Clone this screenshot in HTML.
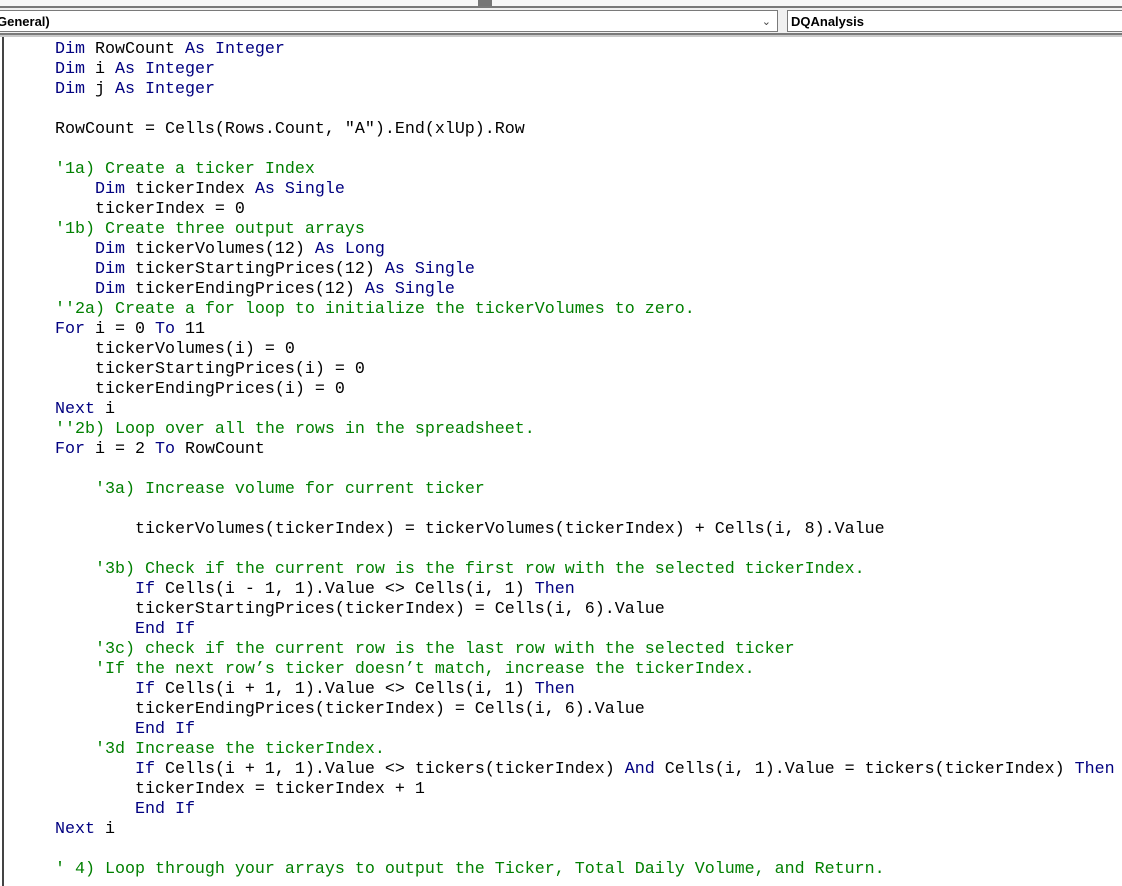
<!DOCTYPE html>
<html><head><meta charset="utf-8"><style>
body{margin:0;width:1122px;height:886px;background:#fff;overflow:hidden;position:relative;font-family:"Liberation Sans",sans-serif}
.top{position:absolute;left:0;top:0;width:1122px;height:6px;background:#f8f8f8}
.l1{position:absolute;left:0;top:6px;width:1122px;height:2px;background:#7a7a7a}
.bar{position:absolute;left:0;top:8px;width:1122px;height:27px;background:#f0f0f0}
.box{position:absolute;top:10px;height:22px;background:#fff;border:1px solid #7a7a7a;font-weight:bold;font-size:13px;line-height:22px;box-sizing:border-box;padding-left:3px}
.l2{position:absolute;left:0;top:33px;width:1122px;height:2px;background:#7a7a7a}
.l3{position:absolute;left:0;top:35px;width:1122px;height:2px;background:#c8c8c8}
.marg{position:absolute;left:2px;top:37px;width:2px;height:849px;background:#444}
pre{position:absolute;left:55px;top:40px;margin:0;font-family:"Liberation Mono",monospace;font-size:16.67px;line-height:20px;color:#000}
.k{color:#000080}.c{color:#008000}
.thumb{position:absolute;left:478px;top:0;width:14px;height:6px;background:#777}
</style></head><body>
<div class="top"></div><div class="thumb"></div><div class="l1"></div><div class="bar"></div>
<div class="box" style="left:-4px;width:782px;padding-left:0">General)<span style="position:absolute;right:6px;top:0;font-weight:normal;font-size:11px;color:#444">&#8964;</span></div>
<div class="box" style="left:787px;width:340px">DQAnalysis</div>
<div class="l2"></div><div class="l3"></div><div class="marg"></div>
<pre><span class="k">Dim</span> RowCount <span class="k">As Integer</span>
<span class="k">Dim</span> i <span class="k">As Integer</span>
<span class="k">Dim</span> j <span class="k">As Integer</span>

RowCount = Cells(Rows.Count, "A").End(xlUp).Row

<span class="c">'1a) Create a ticker Index</span>
    <span class="k">Dim</span> tickerIndex <span class="k">As Single</span>
    tickerIndex = 0
<span class="c">'1b) Create three output arrays</span>
    <span class="k">Dim</span> tickerVolumes(12) <span class="k">As Long</span>
    <span class="k">Dim</span> tickerStartingPrices(12) <span class="k">As Single</span>
    <span class="k">Dim</span> tickerEndingPrices(12) <span class="k">As Single</span>
<span class="c">''2a) Create a for loop to initialize the tickerVolumes to zero.</span>
<span class="k">For</span> i = 0 <span class="k">To</span> 11
    tickerVolumes(i) = 0
    tickerStartingPrices(i) = 0
    tickerEndingPrices(i) = 0
<span class="k">Next</span> i
<span class="c">''2b) Loop over all the rows in the spreadsheet.</span>
<span class="k">For</span> i = 2 <span class="k">To</span> RowCount

    <span class="c">'3a) Increase volume for current ticker</span>

        tickerVolumes(tickerIndex) = tickerVolumes(tickerIndex) + Cells(i, 8).Value

    <span class="c">'3b) Check if the current row is the first row with the selected tickerIndex.</span>
        <span class="k">If</span> Cells(i - 1, 1).Value &lt;&gt; Cells(i, 1) <span class="k">Then</span>
        tickerStartingPrices(tickerIndex) = Cells(i, 6).Value
        <span class="k">End If</span>
    <span class="c">'3c) check if the current row is the last row with the selected ticker</span>
    <span class="c">'If the next row’s ticker doesn’t match, increase the tickerIndex.</span>
        <span class="k">If</span> Cells(i + 1, 1).Value &lt;&gt; Cells(i, 1) <span class="k">Then</span>
        tickerEndingPrices(tickerIndex) = Cells(i, 6).Value
        <span class="k">End If</span>
    <span class="c">'3d Increase the tickerIndex.</span>
        <span class="k">If</span> Cells(i + 1, 1).Value &lt;&gt; tickers(tickerIndex) <span class="k">And</span> Cells(i, 1).Value = tickers(tickerIndex) <span class="k">Then</span>
        tickerIndex = tickerIndex + 1
        <span class="k">End If</span>
<span class="k">Next</span> i

<span class="c">' 4) Loop through your arrays to output the Ticker, Total Daily Volume, and Return.</span>
</pre>
</body></html>
